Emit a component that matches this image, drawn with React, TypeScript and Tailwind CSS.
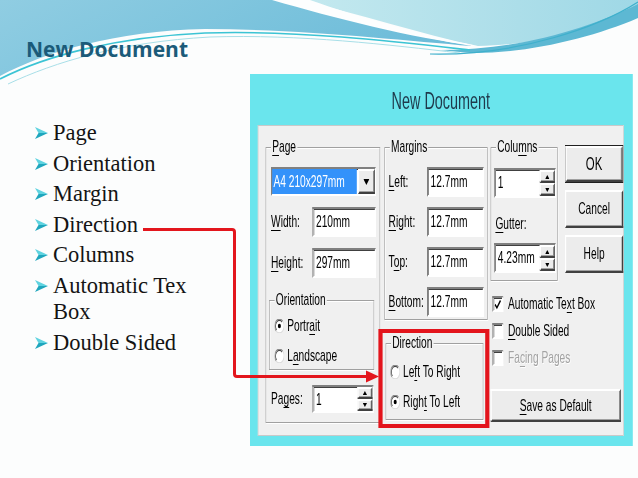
import React from 'react'

const sunken =
  'bg-white border-2 border-t-[#808080] border-l-[#808080] border-b-white border-r-white shadow-[inset_1px_1px_0_#404040]'
const raised =
  'bg-[#ececec] border-2 border-t-white border-l-white border-b-[#404040] border-r-[#404040] shadow-[inset_-1px_-1px_0_#a0a0a0]'
const etched = 'border border-[#a0a0a0] shadow-[1px_1px_0_#fff,inset_1px_1px_0_#fff]'

const BULLETS: React.ReactNode[] = [
  'Page',
  'Orientation',
  'Margin',
  'Direction',
  'Columns',
  <>
    Automatic Tex
    <br />
    Box
  </>,
  'Double Sided',
]

function Waves() {
  return (
    <svg className="absolute left-0 top-0" width="638" height="100" viewBox="0 0 638 100">
      <defs>
        <linearGradient id="blueL" x1="0" y1="0" x2="1" y2="0.3">
          <stop offset="0" stopColor="#90cde2" />
          <stop offset="1" stopColor="#6cbcd9" />
        </linearGradient>
        <linearGradient id="aqua" x1="0" y1="0" x2="1" y2="0">
          <stop offset="0" stopColor="#c4e9ef" />
          <stop offset="1" stopColor="#9fd8e6" />
        </linearGradient>
      </defs>
      <path d="M0 0 H300 C350 18 410 36 472 46 C400 40 300 29 205 29 C115 31 45 52 0 76 Z" fill="url(#blueL)" />
      <path d="M300 0 H638 V12 C600 30 535 45 478 46 C420 34 360 14 300 0 Z" fill="url(#aqua)" />
      <path d="M272 0 H310 C360 18 425 36 478 46 C410 38 335 18 272 0 Z" fill="#fdfefe" />
      <path d="M440 50 C520 50 590 28 638 4 V18 C592 38 525 54 470 53 Z" fill="#5db8d3" />
      <path d="M0 79 C45 56 115 37 205 33 C300 30 400 42 470 50" stroke="#3cc4d4" strokeWidth="1.6" fill="none" />
      <path d="M8 84 C55 62 120 42 210 37 C300 34 390 45 460 53" stroke="#a8dfe8" strokeWidth="1" fill="none" />
      <path d="M430 54 C520 56 600 26 638 2" stroke="#3fb0cc" strokeWidth="1.2" fill="none" />
    </svg>
  )
}

function Arrowhead() {
  return (
    <svg width="13" height="12" viewBox="0 0 13 12" className="mt-[7px] shrink-0">
      <path d="M0 0 L13 6 L3.5 6 Z" fill="#5fd3e0" />
      <path d="M0 12 L13 6 L3.5 6 Z" fill="#1fa6bd" />
    </svg>
  )
}

function U({ children }: { children: React.ReactNode }) {
  return <span className="underline decoration-1 underline-offset-[3px]">{children}</span>
}

function Group({ label, className, children }: { label: React.ReactNode; className: string; children: React.ReactNode }) {
  return (
    <div className={`relative ${etched} ${className}`}>
      <span className="absolute left-[8px] -top-[11px] bg-[#f0f0f0] px-[2px] leading-[20px]">{label}</span>
      {children}
    </div>
  )
}

function Spin() {
  return (
    <div className="flex flex-col w-[25px] shrink-0">
      {[0, 1].map((i) => (
        <div key={i} className={`flex-1 flex items-center justify-center ${raised}`}>
          <svg width="7" height="4" viewBox="0 0 7 4">
            <path d={i === 0 ? 'M0 4 L3.5 0 L7 4 Z' : 'M0 0 L3.5 4 L7 0 Z'} fill="#000" />
          </svg>
        </div>
      ))}
    </div>
  )
}

function Field({ value, className, spin }: { value: string; className: string; spin?: boolean }) {
  return (
    <div className={`flex ${sunken} ${className}`}>
      <span className="flex-1 pl-[4px] leading-[26px]">{value}</span>
      {spin && <Spin />}
    </div>
  )
}

function Radio({ checked }: { checked?: boolean }) {
  return (
    <svg width="16" height="14" viewBox="0 0 12 12" preserveAspectRatio="none" className="shrink-0">
      <circle cx="6" cy="6" r="5.4" fill="#fff" />
      <path d="M10.2 1.8 A5.5 5.5 0 0 0 1.8 10.2" stroke="#8a8a8a" strokeWidth="1" fill="none" />
      <path d="M9.4 2.6 A4.6 4.6 0 0 0 2.6 9.4" stroke="#444" strokeWidth="0.9" fill="none" />
      <path d="M1.8 10.2 A5.5 5.5 0 0 0 10.2 1.8" stroke="#dcdcdc" strokeWidth="1" fill="none" />
      {checked && <circle cx="6" cy="6" r="1.9" fill="#000" />}
    </svg>
  )
}

function Check({ checked, disabled }: { checked?: boolean; disabled?: boolean }) {
  return (
    <div className={`w-[18px] h-[16px] shrink-0 flex items-center justify-center ${sunken} ${disabled ? 'bg-[#f0f0f0]' : ''}`}>
      {checked && (
        <svg width="12" height="11" viewBox="0 0 12 11">
          <path d="M1.5 5.5 L4.5 8.8 L10.5 1.5" stroke="#000" strokeWidth="2" fill="none" />
        </svg>
      )}
    </div>
  )
}

function Dialog() {
  return (
    <div className="w-[383px] h-[372px] shrink-0">
      <div className="w-[638px] h-[372px] origin-top-left scale-x-[0.6] bg-[#6ae5ed] pl-[13px] pr-[15px] pb-[10px] flex flex-col font-['Liberation_Sans',Arial,sans-serif] text-[17px] text-black">
        <div className="h-[51px] shrink-0 flex items-center justify-center text-[24px] text-[#1f3a4c] pt-[3px]">
          New Document
        </div>
        <div className="flex-1 bg-[#f0f0f0] border border-[#c9c9c9] flex pl-[12px]">
          {/* Page column */}
          <Group label={<><U>P</U>age</>} className="mt-[21px] w-[191px] h-[276px] pl-[5px] pt-[19px] flex flex-col">
            <div className={`ml-[3px] w-[175px] h-[29px] flex ${sunken}`}>
              <div className="flex-1 bg-[#3392fa] text-white leading-[25px] pl-[2px] mr-[2px]">A4 210x297mm</div>
              <div className={`w-[28px] flex items-center justify-center ${raised}`}>
                <svg width="10" height="6" viewBox="0 0 10 6">
                  <path d="M0 0 H10 L5 6 Z" fill="#000" />
                </svg>
              </div>
            </div>
            <div className="ml-[3px] mt-[11px] h-[30px] flex items-center">
              <span className="w-[69px]"><U>W</U>idth:</span>
              <Field value="210mm" className="w-[106px] h-[30px]" />
            </div>
            <div className="ml-[3px] mt-[11px] h-[30px] flex items-center">
              <span className="w-[69px]"><U>H</U>eight:</span>
              <Field value="297mm" className="w-[106px] h-[30px]" />
            </div>
            <Group label="Orientation" className="mt-[22px] w-[175px] h-[70px] pl-[8px] pt-[15px] flex flex-col gap-[10px]">
              <div className="h-[20px] flex items-center gap-[5px]">
                <Radio checked />
                <span>Portr<U>a</U>it</span>
              </div>
              <div className="h-[20px] flex items-center gap-[5px]">
                <Radio />
                <span>L<U>a</U>ndscape</span>
              </div>
            </Group>
            <div className="ml-[3px] mt-[15px] h-[28px] flex items-center">
              <span className="w-[69px]">Pa<U>g</U>es:</span>
              <Field value="1" className="w-[102px] h-[28px]" spin />
            </div>
          </Group>

          {/* Margins + Direction */}
          <div className="ml-[7px] w-[172px] flex flex-col">
            <Group label="Margins" className="mt-[21px] h-[173px] pl-[6px] pt-[19px] flex flex-col gap-[10px]">
              {[
                [<><U>L</U>eft:</>, '12.7mm'],
                [<><U>R</U>ight:</>, '12.7mm'],
                [<>T<U>o</U>p:</>, '12.7mm'],
                [<><U>B</U>ottom:</>, '12.7mm'],
              ].map(([label, v], i) => (
                <div key={i} className="h-[30px] flex items-center">
                  <span className="w-[64px]">{label}</span>
                  <Field value={v as string} className="w-[95px] h-[30px]" />
                </div>
              ))}
            </Group>
            <div className="relative mt-[23px] ml-[2px] w-[163px]">
              <Group label="Direction" className="h-[77px] pl-[7px] pt-[18px] flex flex-col gap-[10px]">
                <div className="h-[20px] flex items-center gap-[5px]">
                  <Radio />
                  <span>Le<U>f</U>t To Right</span>
                </div>
                <div className="h-[20px] flex items-center gap-[5px]">
                  <Radio checked />
                  <span>Righ<U>t</U> To Left</span>
                </div>
              </Group>
              <div className="absolute -left-[12px] -right-[10px] -top-[14px] -bottom-[8px] border-x-[7px] border-y-[4px] border-[#e3141c]" />
            </div>
          </div>

          {/* Columns + buttons */}
          <div className="ml-[5px] flex flex-col">
            <div className="flex">
              <Group label={<>Colu<U>m</U>ns</>} className="mt-[21px] w-[112px] h-[134px] pl-[5px] pt-[20px] flex flex-col">
                <Field value="1" className="w-[103px] h-[30px]" spin />
                <div className="mt-[16px] h-[20px] flex items-center pl-[2px]">
                  <span><U>G</U>utter:</span>
                </div>
                <Field value="4.23mm" className="mt-[9px] w-[103px] h-[30px]" spin />
              </Group>
              <div className="ml-[12px] mt-[19px] w-[97px] flex flex-col gap-[7px]">
                <div className="h-[38px] border border-[#202020]">
                  <div className={`h-full flex items-center justify-center text-[19px] ${raised}`}>OK</div>
                </div>
                <div className={`h-[38px] flex items-center justify-center ${raised}`}>Cancel</div>
                <div className={`h-[38px] flex items-center justify-center ${raised}`}>Help</div>
              </div>
            </div>
            <div className="mt-[14px] flex flex-col gap-[9px] pl-[3px]">
              <div className="h-[18px] flex items-center gap-[8px]">
                <Check checked />
                <span>Automatic Te<U>x</U>t Box</span>
              </div>
              <div className="h-[18px] flex items-center gap-[8px]">
                <Check />
                <span><U>D</U>ouble Sided</span>
              </div>
              <div className="h-[18px] flex items-center gap-[8px]">
                <Check disabled />
                <span className="text-[#a3a3a3] [text-shadow:1px_1px_0_#fff]">Fa<U>c</U>ing Pages</span>
              </div>
            </div>
            <div className={`mt-[22px] w-[217px] h-[33px] flex items-center justify-center ${raised}`}>
              <span><U>S</U>ave as Default</span>
            </div>
          </div>
        </div>
      </div>
    </div>
  )
}

export default function App() {
  return (
    <div className="relative w-[638px] h-[478px] overflow-hidden bg-[#fcfdfd]">
      <Waves />
      <div className="relative pt-[35px]">
        <h1 className="pl-[26px] h-[28px] leading-[28px] text-[21px] font-bold text-[#1b5b79] font-['Open_Sans',sans-serif]">
          New Document
        </h1>
        <div className="flex mt-[11px]">
          <ul className="w-[250px] pl-[35px] pt-[46px] flex flex-col gap-[4px] font-['Liberation_Serif',serif] text-[22.5px] leading-[26.5px] text-[#141414]">
            {BULLETS.map((b, i) => (
              <li key={i} className="flex gap-[5px]">
                <Arrowhead />
                <span>{b}</span>
              </li>
            ))}
          </ul>
          <Dialog />
        </div>
      </div>
      <svg className="absolute left-0 top-0 pointer-events-none" width="638" height="478" viewBox="0 0 638 478">
        <path d="M143 229.5 H232 Q234.5 229.5 234.5 232 V374 Q234.5 376.5 237 376.5 H368" stroke="#e3161d" strokeWidth="3" fill="none" />
        <path d="M366 370.5 L379 376.5 L366 382.5 Z" fill="#e3161d" />
      </svg>
    </div>
  )
}
